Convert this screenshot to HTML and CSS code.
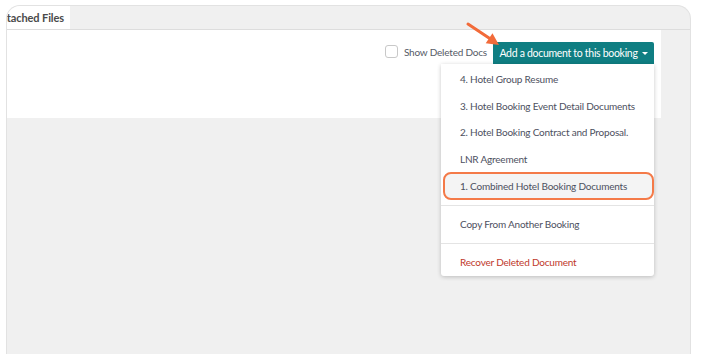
FILE: index.html
```html
<!DOCTYPE html>
<html>
<head>
<meta charset="utf-8">
<link rel="stylesheet" href="styles.css">
</head>
<body>
<div class="card">
  <div class="tabs">
    <div class="tab"><span class="tab-text">Attached Files</span></div>
  </div>
  <div class="panel">
    <div class="toolbar">
      <label class="check"><span class="box"></span><span class="check-label">Show Deleted Docs</span></label>
      <div class="btn-wrap">
        <button class="btn">Add a document to this booking <span class="caret"></span></button>
        <ul class="menu">
          <li class="item">4. Hotel Group Resume</li>
          <li class="item">3. Hotel Booking Event Detail Documents</li>
          <li class="item">2. Hotel Booking Contract and Proposal.</li>
          <li class="item">LNR Agreement</li>
          <li class="item hl">1. Combined Hotel Booking Documents</li>
          <li class="divider"></li>
          <li class="item">Copy From Another Booking</li>
          <li class="divider"></li>
          <li class="item danger">Recover Deleted Document</li>
        </ul>
      </div>
    </div>
  </div>
  <svg class="arrow" width="40" height="30" viewBox="0 0 40 30">
    <line x1="3" y1="3" x2="24" y2="17" stroke="#f26b3a" stroke-width="3" stroke-linecap="round"/>
    <polygon points="34,24 20.7,22.3 27.5,12.3" fill="#f26b3a"/>
  </svg>
</div>
</body>
</html>
```

FILE: styles.css
```css
html, body {
  margin: 0;
  padding: 0;
  background: #ffffff;
  font-family: Lato, "Open Sans", sans-serif;
}
.card {
  position: relative;
  margin: 5px 17px 0 6px;
  height: 349px;
  box-sizing: border-box;
  border: 1px solid #e2e2e2;
  border-bottom: none;
  border-radius: 14px 14px 0 0;
  background: #f0f0f0;
  overflow: hidden;
}
.tabs {
  height: 23px;
  display: flex;
  border-bottom: 1px solid #dddddd;
}
.tab {
  width: 63px;
  background: #ffffff;
  overflow: hidden;
  display: flex;
  align-items: center;
  justify-content: flex-end;
  padding-right: 6px;
  box-sizing: border-box;
}
.tab-text {
  white-space: nowrap;
  font-size: 11px;
  font-weight: 700;
  color: #4a4a4a;
  letter-spacing: -0.1px;
}
.panel {
  background: #ffffff;
  height: 88px;
  margin-right: 29px;
  box-sizing: border-box;
  padding: 12px 7px 0 0;
}
.toolbar {
  display: flex;
  justify-content: flex-end;
  align-items: center;
  gap: 6px;
}
.check {
  display: flex;
  align-items: center;
  gap: 6px;
  margin-top: -3px;
}
.box {
  width: 11px;
  height: 11px;
  border: 1px solid #c8c8c8;
  border-radius: 3px;
  background: #fff;
}
.check-label {
  font-size: 10px;
  color: #555a66;
  letter-spacing: -0.2px;
}
.btn-wrap {
  position: relative;
}
.btn {
  display: flex;
  align-items: center;
  gap: 4px;
  height: 22px;
  width: 161px;
  justify-content: center;
  border: none;
  border-radius: 2px 2px 0 0;
  background: #0f7e82;
  color: #ffffff;
  font-family: Lato, "Open Sans", sans-serif;
  font-size: 10.5px;
  letter-spacing: -0.3px;
  padding: 0;
}
.caret {
  width: 0;
  height: 0;
  border-left: 3px solid transparent;
  border-right: 3px solid transparent;
  border-top: 3px solid #ffffff;
}
.menu {
  position: absolute;
  right: 0;
  top: 22px;
  width: 213px;
  margin: 0;
  padding: 2px 0 0;
  list-style: none;
  background: #ffffff;
  border-radius: 0 0 3px 3px;
  box-shadow: 0 1px 4px rgba(0,0,0,0.22);
  box-sizing: border-box;
}
.item {
  height: 26.6px;
  line-height: 26.6px;
  padding-left: 19px;
  font-size: 10px;
  color: #4d5060;
  letter-spacing: -0.2px;
  white-space: nowrap;
}
.item.hl {
  margin: 0 0 0 2px;
  padding-left: 15px;
  height: 24px;
  line-height: 24px;
  border: 2px solid #f47a48;
  border-radius: 8px;
  background: #f4f4f4;
}
.divider {
  height: 1px;
  background: #e4e4e4;
  margin: 5px 0;
}
.item.danger {
  color: #c0392b;
}
.arrow {
  position: absolute;
  left: 458px;
  top: 15px;
}
```
